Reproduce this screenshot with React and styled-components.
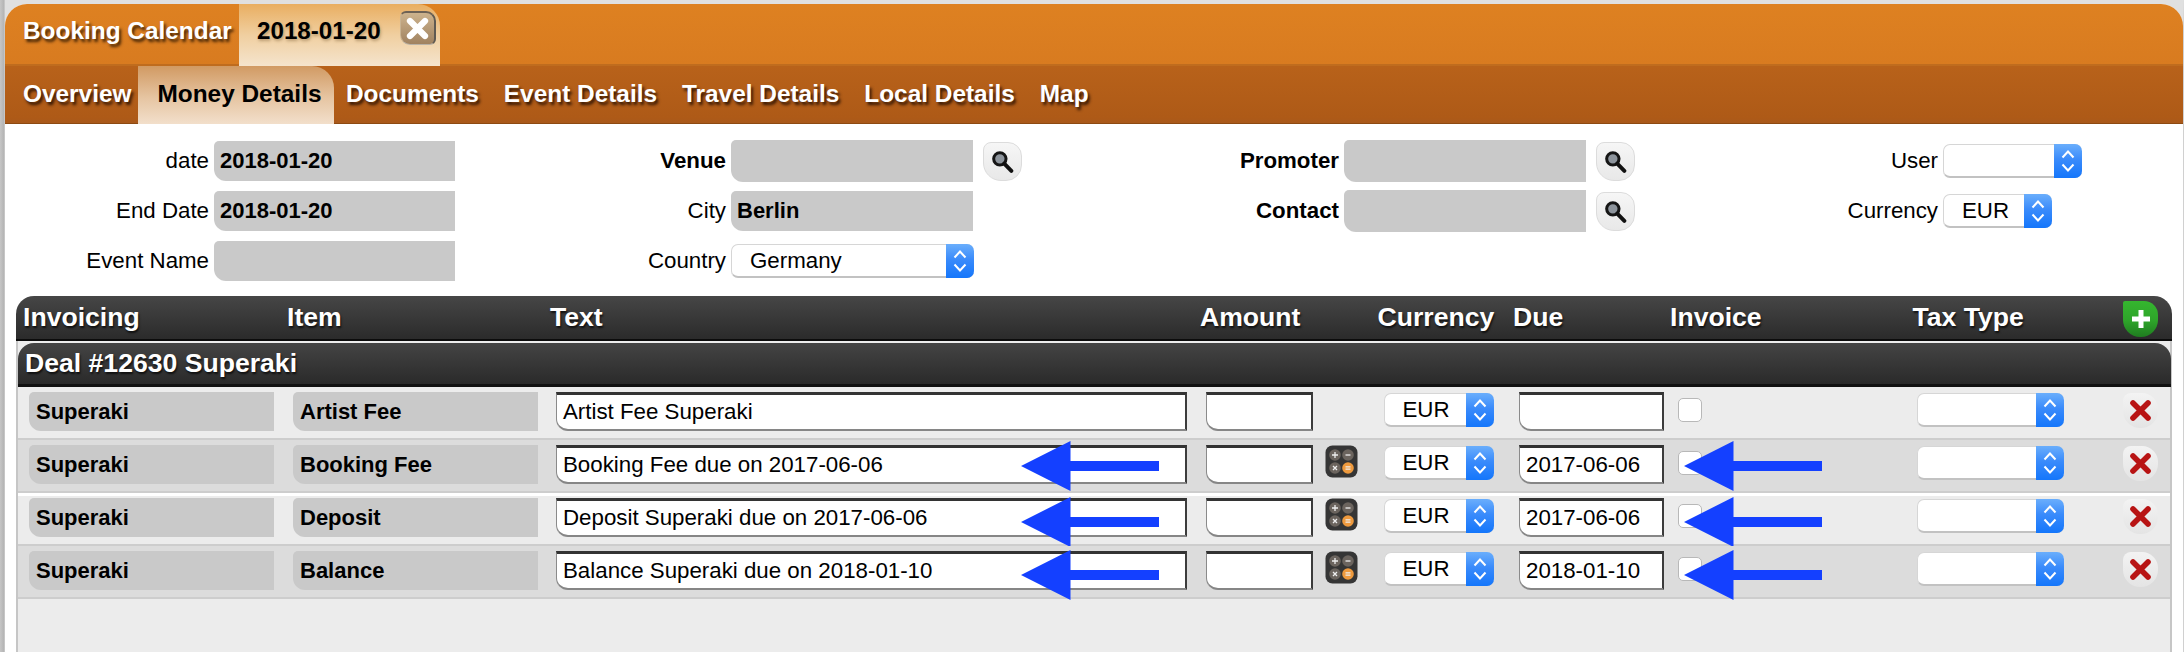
import React from 'react';
import styled, { createGlobalStyle } from 'styled-components';

const GlobalStyle = createGlobalStyle`
    html, body {
        margin: 0;
        padding: 0;
        background: #fff;
        font-family: "Liberation Sans", Arial, sans-serif;
        color: #000;
    }
`;

// shared by the column header and every row of the table
const tableColumns = '264px 263px 650px 119px 58.5px 135.5px 159px 238.5px 206.5px 41px';

const Page = styled.div`
    width: 2184px;
    height: 652px;
    overflow: hidden;
    box-sizing: border-box;
    padding: 4px 1px 0 5px;
    background: linear-gradient(90deg, #c6c6c6 0, #b4b4b4 4px, #d8d8d8 5px) left / 5px 100% no-repeat,
        linear-gradient(180deg, #dfdfdf 0, #d0d0d0 30px) right / 1px 100% no-repeat, #e0e0e0;
`;

const Window = styled.div`
    height: 100%;
    background: #fff;
    border-radius: 22px 22px 0 0;
`;

const TitleBar = styled.div`
    display: flex;
    height: 62px;
    box-sizing: border-box;
    padding-left: 18px;
    background: linear-gradient(180deg, #de8121 0, #d87b20 100%);
    border-radius: 22px 22px 0 0;
    border-bottom: 2px solid #bf6c1e;
`;

const TitleText = styled.div`
    width: 216px;
    font-size: 24.4px;
    font-weight: bold;
    line-height: 54px;
    color: #fff;
    white-space: nowrap;
    text-shadow: 2px 3px 3px rgba(40, 20, 0, 0.85);
`;

const TitleTab = styled.div`
    position: relative;
    width: 201px;
    height: 62px;
    box-sizing: border-box;
    padding-left: 18px;
    font-size: 24.2px;
    font-weight: bold;
    line-height: 54px;
    background: linear-gradient(180deg, #e9ae61 0, #f0cfa0 50%, #f5e4cd 100%);
    border-top-right-radius: 22px;
    text-shadow: 1px 2px 3px rgba(90, 60, 20, 0.35);
`;

const CloseButton = styled.div`
    position: absolute;
    top: 7px;
    right: 4px;
    width: 36px;
    height: 34px;
    box-sizing: border-box;
    display: flex;
    align-items: center;
    justify-content: center;
    background: linear-gradient(180deg, #cdb38d 0, #a08260 100%);
    border-radius: 6px 10px 6px 10px;
    border-top: 2px solid #6d6255;
    border-right: 2px solid #5f5a52;
    border-bottom: 1px solid #b9b2a6;
    border-left: 1px solid #c9b392;
`;

const NavBar = styled.nav`
    display: flex;
    height: 58px;
    box-sizing: border-box;
    padding-left: 18px;
    background: linear-gradient(180deg, #b8621a 0, #ae5a17 90%, #a9591b 100%);
    border-bottom: 1px solid #8d4a12;
`;

const NavItem = styled.div`
    box-sizing: border-box;
    height: 58px;
    padding: ${(p) => (p.$active ? '0 12px 0 19px' : p.$first ? '0 7px 0 0' : '0 12.5px')};
    font-size: 24.4px;
    font-weight: bold;
    line-height: 56px;
    color: ${(p) => (p.$active ? '#000' : '#fff')};
    text-shadow: ${(p) => (p.$active ? 'none' : '2px 3px 3px rgba(30, 10, 0, 0.85)')};
    background: ${(p) => (p.$active ? 'linear-gradient(180deg, #d19a63 0, #e6c5a2 55%, #f2dfcb 100%)' : 'none')};
    border-top-right-radius: ${(p) => (p.$active ? '22px' : '0')};
`;

const Form = styled.div`
    display: grid;
    grid-template-columns: 450px 568px 613px auto;
    height: 172px;
    box-sizing: border-box;
    padding-top: 12px;
`;

const FormColumn = styled.div`
    display: flex;
    flex-direction: column;
`;

const FormRow = styled.div`
    display: flex;
    align-items: center;
    height: 50px;
`;

const FieldLabel = styled.label`
    width: ${(p) => p.$width}px;
    margin-right: 5px;
    flex: none;
    text-align: right;
    font-size: 22.3px;
    font-weight: ${(p) => (p.$bold ? 'bold' : 'normal')};
`;

const ReadOnlyField = styled.div`
    width: ${(p) => p.$width || 242}px;
    height: ${(p) => p.$height || 40}px;
    flex: none;
    box-sizing: border-box;
    padding-left: 6px;
    background: #c9c9c9;
    border-radius: 5px 0 0 12px;
    font-size: 22px;
    font-weight: bold;
    line-height: ${(p) => p.$height || 40}px;
`;

const SearchButton = styled.div`
    width: 39px;
    height: 39px;
    margin-left: 10px;
    flex: none;
    display: flex;
    align-items: center;
    justify-content: center;
    background: linear-gradient(180deg, #f6f6f6 0, #e8e8e8 100%);
    border: 1px solid #dcdcdc;
    box-sizing: border-box;
    border-radius: 8px 14px 16px 18px;
`;

const SelectBox = styled.div`
    display: flex;
    width: ${(p) => p.$width}px;
    height: 34px;
    flex: none;
    box-sizing: border-box;
    background: #fff;
    border: 1px solid #d6d6d6;
    border-bottom: 2px solid #c2c2c2;
    border-right: none;
    border-radius: 7px;
    font-size: 22.3px;
    line-height: 32px;
`;

const SelectValue = styled.span`
    flex: 1;
    padding-left: ${(p) => p.$pad}px;
`;

const SelectArrows = styled.span`
    width: 28px;
    margin: -1px 0 -2px;
    display: flex;
    align-items: center;
    justify-content: center;
    background: linear-gradient(180deg, #6aaefc 0, #3a8bfb 45%, #1476fb 100%);
    border-radius: 0 7px 7px 0;
`;

const Table = styled.section`
    margin-left: 11px;
    width: 2156px;
`;

const HeaderRow = styled.div`
    display: grid;
    grid-template-columns: ${tableColumns};
    height: 45px;
    box-sizing: border-box;
    padding-left: 7px;
    background: linear-gradient(180deg, #464646 0, #2b2b2b 100%);
    border-bottom: 2px solid #0c0c0c;
    border-radius: 18px 18px 0 0;
`;

const HeaderCell = styled.div`
    margin-left: ${(p) => p.$shift || 0}px;
    font-size: 26.6px;
    font-weight: bold;
    line-height: 42px;
    color: #fff;
    white-space: nowrap;
    text-shadow: 1px 2px 2px rgba(0, 0, 0, 0.7);
`;

const AddButton = styled.div`
    width: 35px;
    height: 36px;
    margin: 5px 0 0 6px;
    display: flex;
    align-items: center;
    justify-content: center;
    background: linear-gradient(180deg, #35b62f 0, #2ea42a 55%, #1f7c20 100%);
    border-radius: 2px 14px 17px 17px;
`;

const TableBody = styled.div`
    height: 311px;
    box-sizing: border-box;
    padding-top: 2px;
    background: #ececec;
    border-left: 2px solid #c6c6c6;
    border-right: 2px solid #c6c6c6;
`;

const DealHeader = styled.div`
    height: 44px;
    box-sizing: border-box;
    padding-left: 7px;
    margin-right: -1px;
    font-size: 26.6px;
    font-weight: bold;
    line-height: 40px;
    color: #fff;
    background: linear-gradient(180deg, #444 0, #2a2a2a 100%);
    border-bottom: 3px solid #111;
    border-radius: 16px 16px 0 0;
    text-shadow: 1px 2px 2px rgba(0, 0, 0, 0.7);
`;

const Row = styled.div`
    position: relative;
    display: grid;
    grid-template-columns: ${tableColumns};
    height: 53px;
    box-sizing: border-box;
    padding: 5px 0 0 11px;
    background: ${(p) => (p.$shaded ? '#dcdcdc' : '#ececec')};
    border-bottom: 2px solid #cdcdcd;
    box-shadow: ${(p) => (p.$gap ? 'inset 0 3px 0 #fff' : 'none')};
`;

const NameCell = styled.div`
    width: 245px;
    height: 39px;
    box-sizing: border-box;
    padding-left: 7px;
    background: #c9c9c9;
    border-radius: 5px 0 0 12px;
    font-size: 22px;
    font-weight: bold;
    line-height: 40px;
`;

const TextInput = styled.div`
    width: ${(p) => p.$width}px;
    height: 39px;
    box-sizing: border-box;
    padding-left: 6px;
    background: #fff;
    border-top: 3px solid #333;
    border-right: 2px solid #3c3c3c;
    border-bottom: 2px solid #868686;
    border-left: 1px solid #8a8a8a;
    border-radius: 0 0 0 12px;
    font-size: 22.3px;
    line-height: 34px;
`;

const CheckBox = styled.div`
    width: 24px;
    height: 24px;
    margin-top: 6px;
    box-sizing: border-box;
    background: #fff;
    border: 1px solid #b8b8b8;
    border-radius: 5px;
`;

const CellSelect = styled(SelectBox)`
    margin-top: 1px;
`;

const DeleteButton = styled.div`
    width: 35px;
    height: 35px;
    margin-top: 1px;
    display: flex;
    align-items: center;
    justify-content: center;
    background: linear-gradient(180deg, #f3f3f3 0, #e4e4e4 100%);
    border-radius: 8px 16px 17px 17px;
`;

const ArrowMark = styled.svg`
    position: absolute;
    top: ${(p) => p.$top}px;
    left: ${(p) => p.$left}px;
    width: 138px;
    height: 50px;
`;

function Chevrons() {
    return (
        <svg width="16" height="26" viewBox="0 0 16 26" fill="none" stroke="#fff" strokeWidth="2">
            <path d="M2.5 9.5 8 3.5l5.5 6" />
            <path d="M2.5 16.5 8 22.5l5.5-6" />
        </svg>
    );
}

function Magnifier() {
    return (
        <svg width="23" height="23" viewBox="0 0 26 26" fill="none">
            <circle cx="10" cy="10" r="7" stroke="#151515" strokeWidth="3.4" fill="#8d949c" />
            <path d="M15 15.5l8 8" stroke="#111" strokeWidth="4.5" strokeLinecap="round" />
        </svg>
    );
}

function Calculator() {
    const keys = [
        [10, 10, '#6b645e', 'M7 10h6M10 7v6'],
        [23, 10, '#6b645e', 'M20.5 10h5'],
        [10, 23, '#6b645e', 'M8 21l4 4M12 21l-4 4'],
        [23, 23, '#ee9a3e', 'M20.5 21.8h5M20.5 24.2h5'],
    ];
    return (
        <svg width="33" height="33" viewBox="0 0 33 33">
            <rect x="0.5" y="0.5" width="32" height="32" rx="7" fill="#353535" />
            {keys.map(([cx, cy, fill, d]) => (
                <g key={d}>
                    <circle cx={cx} cy={cy} r="5.8" fill={fill} />
                    <path d={d} stroke="#eee" strokeWidth="1.3" fill="none" />
                </g>
            ))}
        </svg>
    );
}

function CrossIcon({ size, color, width }) {
    return (
        <svg width={size} height={size} viewBox="0 0 20 20" fill="none">
            <path
                d="M4 4l12 12M16 4 4 16"
                stroke={color}
                strokeWidth={width}
                strokeLinecap="round"
                style={{ filter: 'blur(0.6px)' }}
            />
        </svg>
    );
}

function PlusIcon() {
    return (
        <svg width="24" height="24" viewBox="0 0 24 24" fill="none">
            <path
                d="M12 3v18M3 12h18"
                stroke="#fff"
                strokeWidth="5"
                style={{ filter: 'blur(0.6px)' }}
            />
        </svg>
    );
}

function Arrow({ top, left }) {
    return (
        <ArrowMark $top={top} $left={left} viewBox="0 0 138 50">
            <path d="M0 25 49.5 0v20H138v10H49.5v20z" fill="#1440ff" />
        </ArrowMark>
    );
}

const tabs = ['Overview', 'Money Details', 'Documents', 'Event Details', 'Travel Details', 'Local Details', 'Map'];

const lines = [
    { name: 'Artist Fee', text: 'Artist Fee Superaki', due: '' },
    { name: 'Booking Fee', text: 'Booking Fee due on 2017-06-06', due: '2017-06-06', shaded: true, arrowTop: 1 },
    { name: 'Deposit', text: 'Deposit Superaki due on 2017-06-06', due: '2017-06-06', gap: true, arrowTop: 4 },
    { name: 'Balance', text: 'Balance Superaki due on 2018-01-10', due: '2018-01-10', shaded: true, arrowTop: 4 },
];

function App() {
    return (
        <>
            <GlobalStyle />
            <Page>
                <Window>
                    <TitleBar>
                        <TitleText>Booking Calendar</TitleText>
                        <TitleTab>
                            2018-01-20
                            <CloseButton>
                                <CrossIcon size={25} color="#fff" width={5} />
                            </CloseButton>
                        </TitleTab>
                    </TitleBar>
                    <NavBar>
                        {tabs.map((tab, i) => (
                            <NavItem key={tab} $first={i === 0} $active={tab === 'Money Details'}>
                                {tab}
                            </NavItem>
                        ))}
                    </NavBar>
                    <Form>
                        <FormColumn>
                            <FormRow>
                                <FieldLabel $width={204}>date</FieldLabel>
                                <ReadOnlyField $width={241}>2018-01-20</ReadOnlyField>
                            </FormRow>
                            <FormRow>
                                <FieldLabel $width={204}>End Date</FieldLabel>
                                <ReadOnlyField $width={241}>2018-01-20</ReadOnlyField>
                            </FormRow>
                            <FormRow>
                                <FieldLabel $width={204}>Event Name</FieldLabel>
                                <ReadOnlyField $width={241} />
                            </FormRow>
                        </FormColumn>
                        <FormColumn>
                            <FormRow>
                                <FieldLabel $width={271} $bold>Venue</FieldLabel>
                                <ReadOnlyField $height={42} />
                                <SearchButton>
                                    <Magnifier />
                                </SearchButton>
                            </FormRow>
                            <FormRow>
                                <FieldLabel $width={271}>City</FieldLabel>
                                <ReadOnlyField>Berlin</ReadOnlyField>
                            </FormRow>
                            <FormRow>
                                <FieldLabel $width={271}>Country</FieldLabel>
                                <SelectBox $width={243}>
                                    <SelectValue $pad={18}>Germany</SelectValue>
                                    <SelectArrows>
                                        <Chevrons />
                                    </SelectArrows>
                                </SelectBox>
                            </FormRow>
                        </FormColumn>
                        <FormColumn>
                            <FormRow>
                                <FieldLabel $width={316} $bold>Promoter</FieldLabel>
                                <ReadOnlyField $height={42} />
                                <SearchButton>
                                    <Magnifier />
                                </SearchButton>
                            </FormRow>
                            <FormRow>
                                <FieldLabel $width={316} $bold>Contact</FieldLabel>
                                <ReadOnlyField $height={42} />
                                <SearchButton>
                                    <Magnifier />
                                </SearchButton>
                            </FormRow>
                        </FormColumn>
                        <FormColumn>
                            <FormRow>
                                <FieldLabel $width={302}>User</FieldLabel>
                                <SelectBox $width={139}>
                                    <SelectValue $pad={18} />
                                    <SelectArrows>
                                        <Chevrons />
                                    </SelectArrows>
                                </SelectBox>
                            </FormRow>
                            <FormRow>
                                <FieldLabel $width={302}>Currency</FieldLabel>
                                <SelectBox $width={109}>
                                    <SelectValue $pad={18}>EUR</SelectValue>
                                    <SelectArrows>
                                        <Chevrons />
                                    </SelectArrows>
                                </SelectBox>
                            </FormRow>
                        </FormColumn>
                    </Form>
                    <Table>
                        <HeaderRow>
                            <HeaderCell>Invoicing</HeaderCell>
                            <HeaderCell>Item</HeaderCell>
                            <HeaderCell>Text</HeaderCell>
                            <HeaderCell>Amount</HeaderCell>
                            <HeaderCell />
                            <HeaderCell>Currency</HeaderCell>
                            <HeaderCell>Due</HeaderCell>
                            <HeaderCell $shift={-2}>Invoice</HeaderCell>
                            <HeaderCell $shift={2}>Tax Type</HeaderCell>
                            <AddButton>
                                <PlusIcon />
                            </AddButton>
                        </HeaderRow>
                        <TableBody>
                            <DealHeader>Deal #12630 Superaki</DealHeader>
                            {lines.map((line) => (
                                <Row key={line.name} $shaded={line.shaded} $gap={line.gap}>
                                    <NameCell>Superaki</NameCell>
                                    <NameCell>{line.name}</NameCell>
                                    <TextInput $width={631}>{line.text}</TextInput>
                                    <TextInput $width={107} />
                                    <div>{line.due && <Calculator />}</div>
                                    <CellSelect $width={110}>
                                        <SelectValue $pad={18}>EUR</SelectValue>
                                        <SelectArrows>
                                            <Chevrons />
                                        </SelectArrows>
                                    </CellSelect>
                                    <TextInput $width={145}>{line.due}</TextInput>
                                    <CheckBox />
                                    <CellSelect $width={147}>
                                        <SelectValue $pad={18} />
                                        <SelectArrows>
                                            <Chevrons />
                                        </SelectArrows>
                                    </CellSelect>
                                    <DeleteButton>
                                        <CrossIcon size={25} color="#b81414" width={4.5} />
                                    </DeleteButton>
                                    {line.arrowTop !== undefined && (
                                        <>
                                            <Arrow top={line.arrowTop} left={1003} />
                                            <Arrow top={line.arrowTop} left={1666} />
                                        </>
                                    )}
                                </Row>
                            ))}
                        </TableBody>
                    </Table>
                </Window>
            </Page>
        </>
    );
}

export default App;
